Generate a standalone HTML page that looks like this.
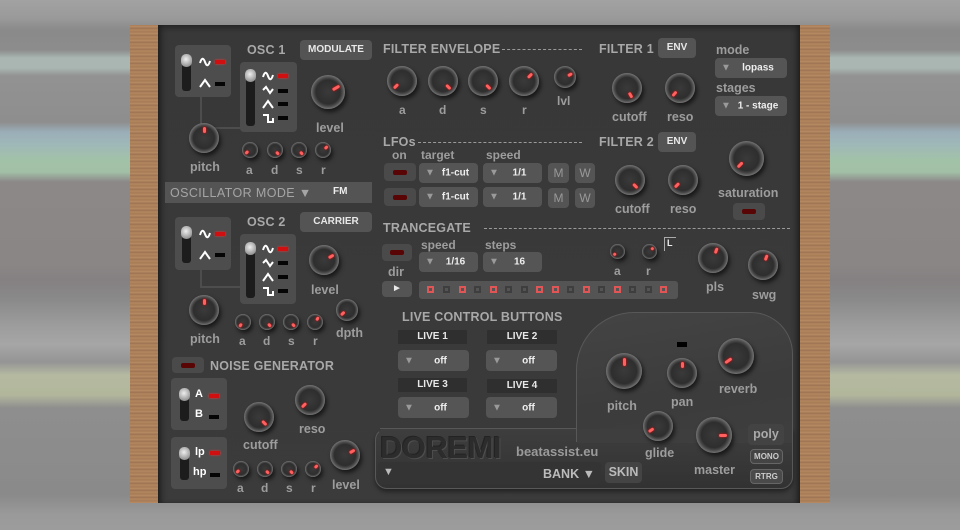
<!DOCTYPE html>
<html><head><meta charset="utf-8"><style>
*{margin:0;padding:0;box-sizing:border-box}
body{width:960px;height:530px;overflow:hidden;position:relative;font-family:"Liberation Sans",sans-serif;font-weight:bold;
background:linear-gradient(180deg,#a2a2a2 0,#9a9a9a 18px,#8a8a8a 30px,#8c8c8c 50px,#a9b6b2 58px,#a9b6b2 68px,#929292 76px,#8e8e8e 122px,#9aaeb8 132px,#9fb8b8 145px,#a2c2a8 160px,#a2c0a6 172px,#8c8888 182px,#8a8686 265px,#858081 280px,#8a8a8a 300px,#9c9c9c 325px,#a6a6a6 345px,#959595 362px,#b4b9a0 375px,#b2b79c 395px,#8e8e8e 408px,#8a8a8a 495px,#9a9a9a 515px,#9c9c9c 530px)}
.a{position:absolute}
.wood{position:absolute;top:25px;height:478px;background:repeating-linear-gradient(180deg,#a67c57 0,#b88d66 2px,#9a7150 3px,#b3875f 5px,#a47a55 7px);}
.panel{position:absolute;left:158px;top:25px;width:642px;height:478px;background:linear-gradient(180deg,#2c2c2c 0,#383838 8px,#3b3b3b 100%);box-shadow:inset 6px 0 6px -3px #1e1e1e,inset -6px 0 6px -3px #1e1e1e}
.l{position:absolute;color:#9d9d9d;font-size:12px;white-space:nowrap}
.h{position:absolute;color:#a8a8a8;font-size:12.5px;white-space:nowrap;letter-spacing:.2px}
.btn{position:absolute;background:#545454;border-radius:4px;color:#e8e8e8;font-size:10px;text-align:center}
.dd{position:absolute;background:#555;border-radius:4px;color:#eee;font-size:10px}
.dd:before{content:"▼";position:absolute;left:6px;top:50%;transform:translateY(-50%);color:#9a9a9a;font-size:10px}
.dd span{position:absolute;left:0;right:0;top:50%;transform:translateY(-50%);text-align:center;padding-left:14px}
.box{position:absolute;background:#4d4d4d;border-radius:4px}
.led{position:absolute;width:10px;height:4px;background:#050505}
.led.on{background:#d01010;box-shadow:0 0 2px #f33}
.trk{position:absolute;background:#1c1c1c;border-radius:3px;width:9px}
.th{position:absolute;width:11px;height:13px;border-radius:5px;background:radial-gradient(circle at 45% 40%,#eee,#999 70%,#666)}
.k{position:absolute;border-radius:50%;background:radial-gradient(circle at 50% 50%,#3a3a3a 0,#2e2e2e 50%,#4a4a4a 60%,#7a7a7a 72%,#9a9a9a 80%,#666 92%,#3a3a3a 100%);box-shadow:2px 3px 4px rgba(0,0,0,.6)}
.k b{position:absolute;left:0;top:0;width:100%;height:100%}
.k b:after{content:"";position:absolute;left:50%;top:13%;width:3px;height:22%;margin-left:-1.5px;background:#ff6060;border-radius:2px;box-shadow:0 0 2px #f00}
.tog{position:absolute;background:#4a4a4a;border-radius:4px}
.tog i{position:absolute;left:50%;top:50%;width:14px;height:5px;margin:-2.5px 0 0 -7px;background:#5a0505;border-radius:2px}
.dash{position:absolute;height:0;border-top:1px dashed #9a9a9a}
svg{position:absolute;overflow:visible}
</style></head><body>

<div class="wood" style="left:130px;width:29px"></div>
<div class="wood" style="left:799px;width:31px"></div>
<div class="panel"></div>

<!-- OSC 1 -->
<div class="a" style="left:200px;top:97px;width:2px;height:32px;background:#4d4d4d"></div>
<div class="a" style="left:200px;top:127px;width:42px;height:2px;background:#4d4d4d"></div>
<div class="box" style="left:175px;top:45px;width:56px;height:52px"></div>
<div class="trk" style="left:182px;top:55px;height:36px"></div><div class="th" style="left:181px;top:54px"></div>
<svg style="left:199px;top:57px" width="12" height="10"><path d="M1 6 Q3.5 -2 6 5 T11 4" stroke="#fff" stroke-width="2" fill="none"/></svg>
<svg style="left:199px;top:78px" width="12" height="10"><path d="M1 9 L6 2 L11 9" stroke="#fff" stroke-width="2" fill="none"/></svg>
<div class="led on" style="left:215px;top:60px"></div><div class="led" style="left:215px;top:82px"></div>
<div class="box" style="left:240px;top:62px;width:57px;height:70px"></div>
<div class="trk" style="left:246px;top:70px;height:56px"></div><div class="th" style="left:245px;top:69px"></div>
<svg style="left:262px;top:71px" width="12" height="10"><path d="M1 6 Q3.5 -2 6 5 T11 4" stroke="#fff" stroke-width="2" fill="none"/></svg>
<svg style="left:262px;top:85px" width="12" height="10"><path d="M1 5 L4 2 L8 8 L11 4" stroke="#fff" stroke-width="2" fill="none"/></svg>
<svg style="left:262px;top:99px" width="12" height="10"><path d="M1 9 L6 2 L11 9" stroke="#fff" stroke-width="2" fill="none"/></svg>
<svg style="left:262px;top:113px" width="12" height="10"><path d="M1 2 H6 V9 H11 V5" stroke="#fff" stroke-width="2" fill="none"/></svg>
<div class="led on" style="left:278px;top:74px"></div><div class="led" style="left:278px;top:89px"></div><div class="led" style="left:278px;top:102px"></div><div class="led" style="left:278px;top:116px"></div>
<div class="h" style="left:247px;top:43px">OSC 1</div>
<div class="btn" style="left:300px;top:40px;width:72px;height:20px;line-height:20px">MODULATE</div>
<div class="k" style="left:311px;top:75px;width:34px;height:34px"><b style="transform:rotate(60deg)"></b></div>
<div class="l" style="left:316px;top:121px;font-size:12.5px">level</div>
<div class="k" style="left:189px;top:123px;width:30px;height:30px"><b></b></div>
<div class="l" style="left:190px;top:160px;font-size:12.5px">pitch</div>
<div class="k" style="left:242px;top:142px;width:16px;height:16px"><b style="transform:rotate(225deg)"></b></div>
<div class="k" style="left:267px;top:142px;width:16px;height:16px"><b style="transform:rotate(135deg)"></b></div>
<div class="k" style="left:291px;top:142px;width:16px;height:16px"><b style="transform:rotate(135deg)"></b></div>
<div class="k" style="left:315px;top:142px;width:16px;height:16px"><b style="transform:rotate(45deg)"></b></div>
<div class="l" style="left:246px;top:163px">a</div><div class="l" style="left:271px;top:163px">d</div><div class="l" style="left:296px;top:163px">s</div><div class="l" style="left:321px;top:163px">r</div>

<!-- osc mode -->
<div class="a" style="left:165px;top:182px;width:207px;height:21px;background:#545454"></div>
<div class="l" style="left:170px;top:186px;font-size:12.5px;color:#a5a5a5;font-weight:normal;letter-spacing:.4px">OSCILLATOR MODE ▼</div>
<div class="l" style="left:333px;top:186px;font-size:10px;color:#eee">FM</div>

<!-- OSC 2 -->
<div class="a" style="left:200px;top:270px;width:2px;height:18px;background:#4d4d4d"></div>
<div class="a" style="left:200px;top:286px;width:42px;height:2px;background:#4d4d4d"></div>
<div class="box" style="left:175px;top:217px;width:56px;height:53px"></div>
<div class="trk" style="left:182px;top:227px;height:36px"></div><div class="th" style="left:181px;top:226px"></div>
<svg style="left:199px;top:229px" width="12" height="10"><path d="M1 6 Q3.5 -2 6 5 T11 4" stroke="#fff" stroke-width="2" fill="none"/></svg>
<svg style="left:199px;top:250px" width="12" height="10"><path d="M1 9 L6 2 L11 9" stroke="#fff" stroke-width="2" fill="none"/></svg>
<div class="led on" style="left:215px;top:232px"></div><div class="led" style="left:215px;top:253px"></div>
<div class="box" style="left:240px;top:234px;width:56px;height:70px"></div>
<div class="trk" style="left:246px;top:243px;height:55px"></div><div class="th" style="left:245px;top:242px"></div>
<svg style="left:262px;top:244px" width="12" height="10"><path d="M1 6 Q3.5 -2 6 5 T11 4" stroke="#fff" stroke-width="2" fill="none"/></svg>
<svg style="left:262px;top:258px" width="12" height="10"><path d="M1 5 L4 2 L8 8 L11 4" stroke="#fff" stroke-width="2" fill="none"/></svg>
<svg style="left:262px;top:272px" width="12" height="10"><path d="M1 9 L6 2 L11 9" stroke="#fff" stroke-width="2" fill="none"/></svg>
<svg style="left:262px;top:286px" width="12" height="10"><path d="M1 2 H6 V9 H11 V5" stroke="#fff" stroke-width="2" fill="none"/></svg>
<div class="led on" style="left:278px;top:247px"></div><div class="led" style="left:278px;top:261px"></div><div class="led" style="left:278px;top:275px"></div><div class="led" style="left:278px;top:289px"></div>
<div class="h" style="left:247px;top:215px">OSC 2</div>
<div class="btn" style="left:300px;top:212px;width:72px;height:20px;line-height:20px">CARRIER</div>
<div class="k" style="left:309px;top:245px;width:30px;height:30px"><b style="transform:rotate(60deg)"></b></div>
<div class="l" style="left:311px;top:283px;font-size:12.5px">level</div>
<div class="k" style="left:189px;top:295px;width:30px;height:30px"><b></b></div>
<div class="l" style="left:190px;top:332px;font-size:12.5px">pitch</div>
<div class="k" style="left:235px;top:314px;width:16px;height:16px"><b style="transform:rotate(210deg)"></b></div>
<div class="k" style="left:259px;top:314px;width:16px;height:16px"><b style="transform:rotate(135deg)"></b></div>
<div class="k" style="left:283px;top:314px;width:16px;height:16px"><b style="transform:rotate(135deg)"></b></div>
<div class="k" style="left:307px;top:314px;width:16px;height:16px"><b style="transform:rotate(30deg)"></b></div>
<div class="l" style="left:239px;top:334px">a</div><div class="l" style="left:263px;top:334px">d</div><div class="l" style="left:288px;top:334px">s</div><div class="l" style="left:313px;top:334px">r</div>
<div class="k" style="left:336px;top:299px;width:22px;height:22px"><b style="transform:rotate(225deg)"></b></div>
<div class="l" style="left:336px;top:326px;font-size:12.5px">dpth</div>

<!-- Noise -->
<div class="tog" style="left:172px;top:357px;width:32px;height:16px"><i></i></div>
<div class="h" style="left:210px;top:359px">NOISE GENERATOR</div>
<div class="box" style="left:171px;top:378px;width:56px;height:52px"></div>
<div class="trk" style="left:180px;top:389px;height:32px"></div><div class="th" style="left:179px;top:388px"></div>
<div class="l" style="left:195px;top:388px;color:#fff;font-size:11px">A</div><div class="l" style="left:195px;top:408px;color:#fff;font-size:11px">B</div>
<div class="led on" style="left:209px;top:394px"></div><div class="led" style="left:209px;top:415px"></div>
<div class="box" style="left:171px;top:437px;width:56px;height:52px"></div>
<div class="trk" style="left:180px;top:448px;height:32px"></div><div class="th" style="left:179px;top:447px"></div>
<div class="l" style="left:195px;top:446px;color:#fff;font-size:11px">lp</div><div class="l" style="left:193px;top:466px;color:#fff;font-size:11px">hp</div>
<div class="led on" style="left:210px;top:451px"></div><div class="led" style="left:210px;top:473px"></div>
<div class="k" style="left:244px;top:402px;width:30px;height:30px"><b style="transform:rotate(135deg)"></b></div>
<div class="l" style="left:243px;top:438px;font-size:12.5px">cutoff</div>
<div class="k" style="left:295px;top:385px;width:30px;height:30px"><b style="transform:rotate(225deg)"></b></div>
<div class="l" style="left:299px;top:422px;font-size:12.5px">reso</div>
<div class="k" style="left:330px;top:440px;width:30px;height:30px"><b style="transform:rotate(60deg)"></b></div>
<div class="l" style="left:332px;top:478px;font-size:12.5px">level</div>
<div class="k" style="left:233px;top:461px;width:16px;height:16px"><b style="transform:rotate(225deg)"></b></div>
<div class="k" style="left:257px;top:461px;width:16px;height:16px"><b style="transform:rotate(135deg)"></b></div>
<div class="k" style="left:281px;top:461px;width:16px;height:16px"><b style="transform:rotate(135deg)"></b></div>
<div class="k" style="left:305px;top:461px;width:16px;height:16px"><b style="transform:rotate(45deg)"></b></div>
<div class="l" style="left:237px;top:481px">a</div><div class="l" style="left:261px;top:481px">d</div><div class="l" style="left:286px;top:481px">s</div><div class="l" style="left:311px;top:481px">r</div>

<!-- Filter envelope -->
<div class="h" style="left:383px;top:42px">FILTER ENVELOPE</div>
<div class="dash" style="left:502px;top:49px;width:80px"></div>
<div class="k" style="left:387px;top:66px;width:30px;height:30px"><b style="transform:rotate(225deg)"></b></div>
<div class="k" style="left:428px;top:66px;width:30px;height:30px"><b style="transform:rotate(135deg)"></b></div>
<div class="k" style="left:468px;top:66px;width:30px;height:30px"><b style="transform:rotate(135deg)"></b></div>
<div class="k" style="left:509px;top:66px;width:30px;height:30px"><b style="transform:rotate(45deg)"></b></div>
<div class="k" style="left:554px;top:66px;width:22px;height:22px"><b style="transform:rotate(60deg)"></b></div>
<div class="l" style="left:399px;top:103px">a</div><div class="l" style="left:439px;top:103px">d</div><div class="l" style="left:480px;top:103px">s</div><div class="l" style="left:522px;top:103px">r</div><div class="l" style="left:557px;top:94px">lvl</div>

<div class="h" style="left:599px;top:42px">FILTER 1</div>
<div class="btn" style="left:658px;top:38px;width:38px;height:20px;line-height:20px">ENV</div>
<div class="k" style="left:612px;top:73px;width:30px;height:30px"><b style="transform:rotate(150deg)"></b></div>
<div class="k" style="left:665px;top:73px;width:30px;height:30px"><b style="transform:rotate(220deg)"></b></div>
<div class="l" style="left:612px;top:110px;font-size:12.5px">cutoff</div><div class="l" style="left:667px;top:110px;font-size:12.5px">reso</div>
<div class="l" style="left:716px;top:43px;font-size:12.5px">mode</div>
<div class="dd" style="left:715px;top:58px;width:72px;height:20px"><span>lopass</span></div>
<div class="l" style="left:716px;top:81px;font-size:12.5px">stages</div>
<div class="dd" style="left:715px;top:96px;width:72px;height:20px"><span>1 - stage</span></div>

<!-- LFOs -->
<div class="h" style="left:383px;top:135px">LFOs</div>
<div class="dash" style="left:418px;top:142px;width:164px"></div>
<div class="l" style="left:392px;top:148px">on</div><div class="l" style="left:421px;top:148px">target</div><div class="l" style="left:486px;top:148px">speed</div>
<div class="tog" style="left:384px;top:163px;width:32px;height:18px"><i></i></div>
<div class="tog" style="left:384px;top:188px;width:32px;height:18px"><i></i></div>
<div class="dd" style="left:419px;top:163px;width:59px;height:20px"><span>f1-cut</span></div>
<div class="dd" style="left:419px;top:187px;width:59px;height:20px"><span>f1-cut</span></div>
<div class="dd" style="left:483px;top:163px;width:59px;height:20px"><span>1/1</span></div>
<div class="dd" style="left:483px;top:187px;width:59px;height:20px"><span>1/1</span></div>
<div class="btn" style="left:548px;top:163px;width:21px;height:20px;line-height:20px;color:#999;font-weight:normal;font-size:12px">M</div>
<div class="btn" style="left:575px;top:163px;width:20px;height:20px;line-height:20px;color:#999;font-weight:normal;font-size:12px">W</div>
<div class="btn" style="left:548px;top:188px;width:21px;height:20px;line-height:20px;color:#999;font-weight:normal;font-size:12px">M</div>
<div class="btn" style="left:575px;top:188px;width:20px;height:20px;line-height:20px;color:#999;font-weight:normal;font-size:12px">W</div>

<div class="h" style="left:599px;top:135px">FILTER 2</div>
<div class="btn" style="left:658px;top:132px;width:38px;height:20px;line-height:20px">ENV</div>
<div class="k" style="left:615px;top:165px;width:30px;height:30px"><b style="transform:rotate(135deg)"></b></div>
<div class="k" style="left:668px;top:165px;width:30px;height:30px"><b style="transform:rotate(225deg)"></b></div>
<div class="l" style="left:615px;top:202px;font-size:12.5px">cutoff</div><div class="l" style="left:670px;top:202px;font-size:12.5px">reso</div>
<div class="k" style="left:729px;top:141px;width:35px;height:35px"><b style="transform:rotate(225deg)"></b></div>
<div class="l" style="left:718px;top:186px;font-size:12.5px">saturation</div>
<div class="tog" style="left:733px;top:203px;width:32px;height:17px"><i></i></div>

<!-- Trancegate -->
<div class="h" style="left:383px;top:221px">TRANCEGATE</div>
<div class="dash" style="left:484px;top:228px;width:306px"></div>
<div class="tog" style="left:382px;top:244px;width:30px;height:17px"><i></i></div>
<div class="l" style="left:388px;top:265px;font-size:12.5px">dir</div>
<div class="btn" style="left:382px;top:281px;width:30px;height:16px;line-height:16px;font-size:10px">►</div>
<div class="l" style="left:421px;top:238px">speed</div><div class="l" style="left:485px;top:238px">steps</div>
<div class="dd" style="left:419px;top:252px;width:59px;height:20px"><span>1/16</span></div>
<div class="dd" style="left:483px;top:252px;width:59px;height:20px"><span>16</span></div>
<div class="k" style="left:610px;top:244px;width:15px;height:15px"><b style="transform:rotate(225deg)"></b></div>
<div class="k" style="left:642px;top:244px;width:15px;height:15px"><b style="transform:rotate(45deg)"></b></div>
<div class="l" style="left:614px;top:264px">a</div><div class="l" style="left:646px;top:264px">r</div>
<div class="a" style="left:664px;top:237px;width:12px;height:14px;border-left:1px solid #aaa;border-top:1px solid #aaa;color:#eee;font-size:9px;padding-left:2px">L</div>
<div class="k" style="left:698px;top:243px;width:30px;height:30px"><b style="transform:rotate(20deg)"></b></div>
<div class="k" style="left:748px;top:250px;width:30px;height:30px"><b style="transform:rotate(20deg)"></b></div>
<div class="l" style="left:706px;top:280px;font-size:12.5px">pls</div><div class="l" style="left:752px;top:288px;font-size:12.5px">swg</div>
<div class="a" style="left:419px;top:281px;width:259px;height:18px;background:#545454;border-radius:3px"></div>
<div class="a" style="left:427px;top:286px;width:250px;height:8px">
<div class="a" style="left:0;width:7px;height:7px;border:2px solid #e05555"></div>
<div class="a" style="left:16px;width:7px;height:7px;border:2px solid #3e3e3e"></div>
<div class="a" style="left:32px;width:7px;height:7px;border:2px solid #e05555"></div>
<div class="a" style="left:47px;width:7px;height:7px;border:2px solid #3e3e3e"></div>
<div class="a" style="left:63px;width:7px;height:7px;border:2px solid #e05555"></div>
<div class="a" style="left:78px;width:7px;height:7px;border:2px solid #3e3e3e"></div>
<div class="a" style="left:94px;width:7px;height:7px;border:2px solid #3e3e3e"></div>
<div class="a" style="left:109px;width:7px;height:7px;border:2px solid #e05555"></div>
<div class="a" style="left:125px;width:7px;height:7px;border:2px solid #e05555"></div>
<div class="a" style="left:140px;width:7px;height:7px;border:2px solid #3e3e3e"></div>
<div class="a" style="left:156px;width:7px;height:7px;border:2px solid #e05555"></div>
<div class="a" style="left:171px;width:7px;height:7px;border:2px solid #3e3e3e"></div>
<div class="a" style="left:187px;width:7px;height:7px;border:2px solid #e05555"></div>
<div class="a" style="left:202px;width:7px;height:7px;border:2px solid #3e3e3e"></div>
<div class="a" style="left:218px;width:7px;height:7px;border:2px solid #3e3e3e"></div>
<div class="a" style="left:233px;width:7px;height:7px;border:2px solid #e05555"></div>
</div>

<!-- Live control -->
<div class="h" style="left:402px;top:310px">LIVE CONTROL BUTTONS</div>
<div class="btn" style="left:398px;top:330px;width:69px;height:14px;line-height:14px;background:#2f2f2f;border-radius:1px">LIVE 1</div>
<div class="btn" style="left:487px;top:330px;width:70px;height:14px;line-height:14px;background:#2f2f2f;border-radius:1px">LIVE 2</div>
<div class="btn" style="left:398px;top:378px;width:69px;height:14px;line-height:14px;background:#2f2f2f;border-radius:1px">LIVE 3</div>
<div class="btn" style="left:487px;top:379px;width:70px;height:14px;line-height:14px;background:#2f2f2f;border-radius:1px">LIVE 4</div>
<div class="dd" style="left:398px;top:350px;width:71px;height:21px"><span>off</span></div>
<div class="dd" style="left:486px;top:350px;width:71px;height:21px"><span>off</span></div>
<div class="dd" style="left:398px;top:397px;width:71px;height:21px"><span>off</span></div>
<div class="dd" style="left:486px;top:397px;width:71px;height:21px"><span>off</span></div>

<!-- lower right panel -->
<div class="a" style="left:375px;top:428px;width:418px;height:61px;background:linear-gradient(180deg,#3e3e3e,#323232);border:1px solid #585858;border-top-color:transparent;border-radius:12px 0 12px 12px;box-shadow:0 3px 4px rgba(0,0,0,.4)"></div>
<div class="a" style="left:380px;top:428px;width:197px;height:1px;background:#585858"></div>
<div class="a" style="left:576px;top:312px;width:217px;height:130px;background:linear-gradient(170deg,#444 0,#3c3c3c 60%,#3e3e3e);border:1px solid #585858;border-bottom:none;border-radius:58px 42px 0 0"></div>
<div class="a" style="left:577px;top:429px;width:215px;height:14px;background:#3e3e3e"></div>

<div class="a" style="left:380px;top:431px;font-size:31px;line-height:34px;color:#2c2c2c;letter-spacing:-0.5px;text-shadow:1px 1px 0 #4e4e4e,-1px -1px 0 #232323;font-family:'Liberation Sans',sans-serif">DOREMI</div>
<div class="l" style="left:516px;top:444px;font-size:13px;color:#9a9a9a">beatassist.eu</div>
<div class="a" style="left:378px;top:462px;width:223px;height:22px;background:#343434;border-radius:4px"></div>
<div class="l" style="left:383px;top:466px;font-size:11px;color:#bbb">▼</div>
<div class="l" style="left:543px;top:467px;font-size:12.5px;color:#bbb">BANK ▼</div>
<div class="btn" style="left:605px;top:462px;width:37px;height:21px;line-height:21px;background:#444;color:#bbb;font-size:12.5px">SKIN</div>

<div class="k" style="left:606px;top:353px;width:36px;height:36px"><b></b></div>
<div class="l" style="left:607px;top:399px;font-size:12.5px">pitch</div>
<div class="k" style="left:667px;top:358px;width:30px;height:30px"><b></b></div>
<div class="a" style="left:677px;top:342px;width:10px;height:5px;background:#000"></div>
<div class="l" style="left:671px;top:395px;font-size:12.5px">pan</div>
<div class="k" style="left:718px;top:338px;width:36px;height:36px"><b style="transform:rotate(235deg)"></b></div>
<div class="l" style="left:719px;top:382px;font-size:12.5px">reverb</div>
<div class="k" style="left:643px;top:411px;width:30px;height:30px"><b style="transform:rotate(235deg)"></b></div>
<div class="l" style="left:645px;top:446px;font-size:12.5px">glide</div>
<div class="k" style="left:696px;top:417px;width:36px;height:36px"><b style="transform:rotate(90deg)"></b></div>
<div class="l" style="left:694px;top:463px;font-size:12.5px">master</div>
<div class="btn" style="left:748px;top:424px;width:36px;height:21px;line-height:21px;background:#434343;color:#aaa;font-size:12.5px">poly</div>
<div class="btn" style="left:750px;top:449px;width:33px;height:15px;line-height:14px;background:#444;border:1px solid #666;color:#ccc;font-size:8px;border-radius:4px">MONO</div>
<div class="btn" style="left:750px;top:469px;width:33px;height:15px;line-height:14px;background:#4a4a4a;border:1px solid #666;color:#ccc;font-size:8px;border-radius:4px">RTRG</div>
</body></html>
